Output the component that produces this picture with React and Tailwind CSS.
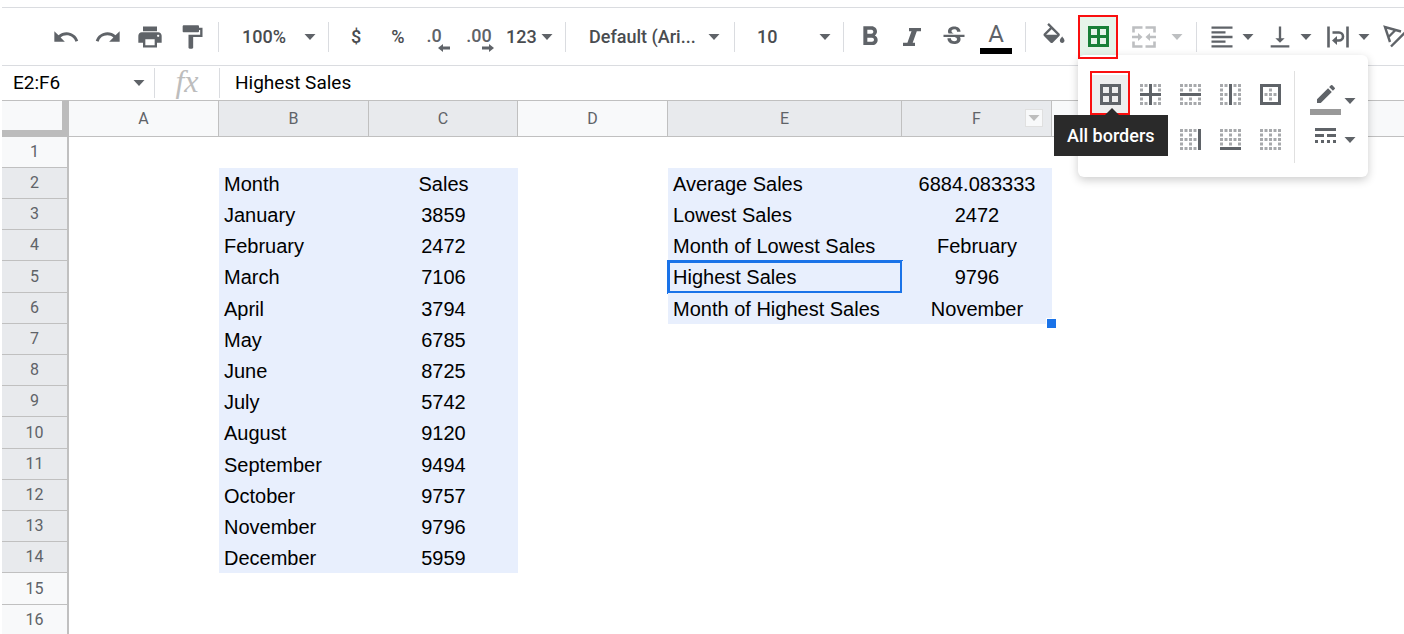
import React, { useState } from 'react';
import {
  MdUndo, MdRedo, MdPrint, MdFormatPaint, MdFormatBold, MdStrikethroughS,
  MdEdit, MdFormatAlignLeft, MdVerticalAlignBottom
} from 'react-icons/md';

const ICON = 28;

// Sheet data
const SALES = [
  ['Month', 'Sales'],
  ['January', '3859'],
  ['February', '2472'],
  ['March', '7106'],
  ['April', '3794'],
  ['May', '6785'],
  ['June', '8725'],
  ['July', '5742'],
  ['August', '9120'],
  ['September', '9494'],
  ['October', '9757'],
  ['November', '9796'],
  ['December', '5959']
];
const SUMMARY = [
  ['Average Sales', '6884.083333'],
  ['Lowest Sales', '2472'],
  ['Month of Lowest Sales', 'February'],
  ['Highest Sales', '9796'],
  ['Month of Highest Sales', 'November']
];
const ROWS = Array.from({ length: 16 }, (_, i) => i + 1);

const COLUMNS = [
  { id: 'A' },
  { id: 'B', selected: true },
  { id: 'C', selected: true },
  { id: 'D' },
  { id: 'E', selected: true },
  { id: 'F', selected: true, menu: true }
];

// Line rects on a 14x14 grid: [x, y, width, height]
const LINES = {
  left: [0, 0, 2, 14],
  right: [12, 0, 2, 14],
  top: [0, 0, 14, 2],
  bottom: [0, 12, 14, 2],
  h: [0, 6, 14, 2],
  v: [6, 0, 2, 14]
};

const BORDERS = [
  { label: 'All borders', lines: ['left', 'right', 'top', 'bottom', 'h', 'v'], solid: true },
  { label: 'Inner borders', lines: ['h', 'v'] },
  { label: 'Horizontal borders', lines: ['h'] },
  { label: 'Vertical borders', lines: ['v'] },
  { label: 'Outer borders', lines: ['left', 'right', 'top', 'bottom'] },
  { label: 'Left border', lines: ['left'] },
  { label: 'Top border', lines: ['top'] },
  { label: 'Right border', lines: ['right'] },
  { label: 'Bottom border', lines: ['bottom'] },
  { label: 'Clear borders', lines: [] }
];

// Dots every 3 units, only where a cell edge runs
const DOTS = [0, 3, 6, 9, 12].flatMap((y) =>
  [0, 3, 6, 9, 12].filter((x) => x % 6 === 0 || y % 6 === 0).map((x) => [x, y])
);

function BorderIcon({ lines, solid }) {
  return (
    <svg width="21" height="21" viewBox="0 0 14 14" fill="currentColor" aria-hidden="true">
      {!solid && DOTS.map(([x, y]) => (
        <rect key={`${x}-${y}`} x={x} y={y} width="2" height="2" opacity="0.55" />
      ))}
      {lines.map((id) => {
        const [x, y, w, h] = LINES[id];
        return <rect key={id} x={x} y={y} width={w} height={h} />;
      })}
    </svg>
  );
}

function Caret({ className = '' }) {
  return (
    <svg width="12" height="6" viewBox="0 0 12 6" className={`shrink-0 pointer-events-none ${className}`} fill="currentColor" aria-hidden="true">
      <path d="M0.5 0h11L6 6z" />
    </svg>
  );
}

function Separator() {
  return <div className="w-px h-[30px] shrink-0 bg-[#dadce0]" />;
}

function Tool({ label, children, className = 'w-[42px]' }) {
  return (
    <button aria-label={label} className={`h-10 shrink-0 flex items-center justify-center ${className}`}>
      {children}
    </button>
  );
}

function ItalicIcon() {
  return (
    <svg width="18" height="18" viewBox="0 0 18 18" fill="currentColor" aria-hidden="true">
      <path d="M6 0h12v3.300h-4.200l-4.100 11.400H12V18H0v-3.300h4.400L8.500 3.300H6z" />
    </svg>
  );
}

function FillIcon() {
  return (
    <svg width="28" height="20" viewBox="0 0 24 17" className="mb-2" fill="currentColor" aria-hidden="true">
      <path d="M16.560 8.940L7.620 0 6.210 1.410l2.380 2.380-5.150 5.150c-.59.59-.59 1.540 0 2.120l5.500 5.500c.29.29.68.44 1.060.44s.77-.15 1.060-.44l5.500-5.500c.59-.58.59-1.530 0-2.120zM5.210 10L10 5.210 14.790 10H5.210zM19 11.500s-2 2.170-2 3.500c0 1.100.9 2 2 2s2-.9 2-2c0-1.330-2-3.500-2-3.500z" />
    </svg>
  );
}

function MergeIcon() {
  return (
    <svg width="24" height="22" viewBox="0 0 24 22" fill="none" stroke="currentColor" strokeWidth="2.6" aria-hidden="true">
      <path d="M10.500 1.500H1.500V6.500M13.500 1.500h9V6.500M10.500 20.500h-9V15.500M13.500 20.500h9V15.500M0 11h7M24 11h-7" />
      <path d="M6 7l4.500 4L6 15zM18 7l-4.500 4 4.500 4z" fill="currentColor" stroke="none" />
    </svg>
  );
}

function WrapIcon() {
  return (
    <svg width="22" height="22" viewBox="0 0 22 22" fill="none" stroke="currentColor" strokeWidth="2.6" aria-hidden="true">
      <path d="M1.500 0.500v21M20.500 0.500v21M5.500 6.500h6.500a4 4 0 0 1 0 8h-3" />
      <path d="M10 10v9l-5-4.500z" fill="currentColor" stroke="none" />
    </svg>
  );
}

function RotateIcon() {
  return (
    <svg width="24" height="24" viewBox="0 0 24 24" fill="none" stroke="currentColor" strokeWidth="2.4" aria-hidden="true">
      <path d="M18 6.500L2 2l5 15M12.500 5L5.500 12M8 21.500L22 7.500" />
    </svg>
  );
}

function LineStyleIcon() {
  return (
    <svg width="21" height="15" viewBox="0 0 21 15" fill="currentColor" aria-hidden="true">
      <path d="M0 0h21v3H0zM0 6h9v3H0zM12 6h9v3h-9zM0 12h3v3H0zM6 12h3v3H6zM12 12h3v3h-3zM18 12h3v3h-3z" />
    </svg>
  );
}

function DecimalIcon({ text, right }) {
  return (
    <span className={`flex flex-col ${right ? 'pl-0.5' : 'pl-0'}`}>
      <span className={`leading-7 ${right ? 'pr-0.5' : 'pr-2'}`}>{text}</span>
      <svg width="12" height="8" viewBox="0 0 12 8" className="self-end -mt-1.5" fill="currentColor" aria-hidden="true">
        <path d={right ? 'M0 2.600h7V0l5 4-5 4V5.400H0z' : 'M12 2.600H5V0L0 4l5 4V5.400h7z'} />
      </svg>
    </span>
  );
}

function BorderMenu() {
  return (
    <div className="absolute left-0 top-10 z-20 flex items-start w-[290px] h-[122px] pl-3 pt-5 bg-white rounded-md shadow-[0_3px_10px_rgba(0,0,0,0.2)]">
      <div className="grid grid-cols-5 gap-y-[5px]">
        {BORDERS.map(({ label, lines, solid }, i) => (
          <div key={label} className="relative w-10 h-10">
            <button aria-label={label} className={`w-full h-full flex items-center justify-center ${i === 0 ? 'bg-[#eeeeee]' : ''}`}>
              <BorderIcon lines={lines} solid={solid} />
            </button>
            {i === 0 && (
              <>
                <span className="absolute -top-1 bottom-0 inset-x-0 border-2 border-[#fa0f0f] pointer-events-none" />
                <span className="absolute z-10 top-[33px] left-[15px] border-x-[7px] border-b-[7px] border-x-transparent border-b-[#2a2a2a]" />
                <span role="tooltip" className="absolute z-10 top-10 -left-9 px-[13px] leading-[41px] whitespace-nowrap bg-[#2a2a2a] text-white text-lg font-medium">
                  {label}
                </span>
              </>
            )}
          </div>
        ))}
      </div>
      <div className="w-px h-[92px] ml-1 -mt-1 bg-[#e0e0e0]" />
      <div className="flex flex-col ml-[15px]">
        <button aria-label="Border color" className="flex items-end gap-[3px] h-10">
          <span className="flex flex-col items-center w-[31px]">
            <MdEdit size={24} />
            <span className="w-full h-1.5 mt-[3px] bg-[#999999]" />
          </span>
          <Caret className="mb-[11px]" />
        </button>
        <button aria-label="Border style" className="flex items-center gap-[3px] h-[42px]">
          <span className="flex justify-center w-[31px]">
            <LineStyleIcon />
          </span>
          <Caret className="mt-2" />
        </button>
      </div>
    </div>
  );
}

function Toolbar() {
  return (
    <div className="flex items-center h-[59px] mt-[7px] pl-[43px] border-y border-[#dadce0] text-[#5f6368] text-lg font-medium">
      <Tool label="Undo"><MdUndo size={ICON} /></Tool>
      <Tool label="Redo"><MdRedo size={ICON} /></Tool>
      <Tool label="Print"><MdPrint size={ICON} /></Tool>
      <Tool label="Paint format"><MdFormatPaint size={ICON} /></Tool>
      <span className="w-[5px] shrink-0" />
      <Separator />
      <button className="w-[109px] pl-[23px] pr-3 shrink-0 flex items-center justify-between text-[#494c50]">
        100%
        <Caret className="text-[#5f6368]" />
      </button>
      <Separator />
      <Tool label="Format as currency" className="w-[42px] ml-1.5 text-[#494c50]">$</Tool>
      <Tool label="Format as percent" className="w-[42px] text-[#494c50]">%</Tool>
      <Tool label="Decrease decimal places" className="w-[38px]"><DecimalIcon text=".0" /></Tool>
      <Tool label="Increase decimal places" className="w-11"><DecimalIcon text=".00" right /></Tool>
      <button className="w-16 pl-[5px] shrink-0 flex items-center gap-1 text-[#494c50]">
        123
        <Caret className="text-[#5f6368]" />
      </button>
      <Separator />
      <label className="relative w-[168px] shrink-0 flex items-center">
        <select aria-label="Font" className="appearance-none w-full pl-[23px] text-[#494c50] outline-none">
          <option>Default (Ari...</option>
        </select>
        <Caret className="absolute right-3.5" />
      </label>
      <Separator />
      <label className="relative w-[108px] shrink-0 flex items-center">
        <select aria-label="Font size" className="appearance-none w-full pl-[22px] text-[#494c50] outline-none">
          <option>10</option>
        </select>
        <Caret className="absolute right-3" />
      </label>
      <Separator />
      <span className="w-[5px] shrink-0" />
      <Tool label="Bold"><MdFormatBold size={32} /></Tool>
      <Tool label="Italic"><ItalicIcon /></Tool>
      <Tool label="Strikethrough"><MdStrikethroughS size={ICON} /></Tool>
      <Tool label="Text color">
        <span className="flex flex-col items-center">
          <span className="text-2xl leading-7 font-normal">A</span>
          <span className="w-8 h-1.5 bg-black" />
        </span>
      </Tool>
      <span className="w-2 shrink-0" />
      <Separator />
      <Tool label="Fill color" className="w-[52px] pl-1"><FillIcon /></Tool>
      <div className="relative w-10 h-[44px] shrink-0">
        <button aria-label="Borders" className="w-full h-full flex items-center justify-center bg-[#e6f4ea] text-[#188038]">
          <BorderIcon lines={BORDERS[0].lines} solid />
        </button>
        <BorderMenu />
        <span className="absolute inset-0 z-30 border-2 border-[#fa0f0f] pointer-events-none" />
      </div>
      <button aria-label="Merge cells" className="w-[78px] pl-3.5 shrink-0 flex items-center gap-[15px] text-[#bdbfc1]">
        <MergeIcon />
        <Caret />
      </button>
      <Separator />
      <button aria-label="Horizontal align" className="w-[58px] pl-[11px] shrink-0 flex items-center gap-1.5">
        <MdFormatAlignLeft size={ICON} />
        <Caret />
      </button>
      <button aria-label="Vertical align" className="w-[58px] pl-[11px] shrink-0 flex items-center gap-1.5">
        <MdVerticalAlignBottom size={ICON} />
        <Caret />
      </button>
      <button aria-label="Text wrapping" className="w-[58px] pl-3.5 shrink-0 flex items-center gap-[9px]">
        <WrapIcon />
        <Caret />
      </button>
      <button aria-label="Text rotation" className="pl-3 shrink-0">
        <RotateIcon />
      </button>
    </div>
  );
}

function FormulaBar() {
  const [range, setRange] = useState('E2:F6');
  const [formula, setFormula] = useState('Highest Sales');

  return (
    <div className="flex items-center h-[34px] text-[19px] text-black">
      <input aria-label="Name box" value={range} onChange={(e) => setRange(e.target.value)} className="w-[131px] pl-[11px] shrink-0 outline-none" />
      <Caret className="text-[#5f6368]" />
      <span className="w-[9px] shrink-0" />
      <Separator />
      <span className="w-16 pb-1 shrink-0 text-center italic text-[32px] leading-7 text-[#bdbdbd] font-['Liberation_Serif',serif]">fx</span>
      <Separator />
      <input aria-label="Formula" value={formula} onChange={(e) => setFormula(e.target.value)} className="flex-1 min-w-0 pl-[15px] outline-none" />
    </div>
  );
}

function Sheet() {
  return (
    <table className="w-full table-fixed border-separate border-spacing-0 text-[#5f6368]">
      <colgroup>
        <col className="w-[67px]" />
        <col className="w-[150px]" />
        <col className="w-[150px]" />
        <col className="w-[149px]" />
        <col className="w-[150px]" />
        <col className="w-[234px]" />
        <col className="w-[150px]" />
        <col />
      </colgroup>
      <thead>
        <tr className="h-[37px] text-base">
          <td className="p-0 border-t border-t-[#c0c0c0] border-r-[7px] border-b-[7px] border-r-[#bcbcbc] border-b-[#bcbcbc] bg-[#f8f9fa]" />
          {COLUMNS.map(({ id, selected, menu }) => (
            <th key={id} scope="col" className={`relative p-0 font-normal border-y border-r border-[#c0c0c0] ${selected ? 'bg-[#e8eaed]' : 'bg-[#f8f9fa]'}`}>
              {id}
              {menu && (
                <button aria-label="Column menu" className="absolute right-2 top-2 w-[18px] h-[18px] flex items-center justify-center border border-[#e0e0e0] bg-[#f8f9fa] text-[#bdbdbd]">
                  <Caret />
                </button>
              )}
            </th>
          ))}
          <td className="p-0 border-y border-[#c0c0c0] bg-[#f8f9fa]" />
        </tr>
      </thead>
      <tbody>
        {ROWS.map((n) => {
          const sales = SALES[n - 2];
          const summary = SUMMARY[n - 2];
          const active = n === 5;
          return (
            <tr key={n} className="h-[31px] nth-[5n]:h-8 text-xl leading-6 text-black font-['Liberation_Sans',Arial,sans-serif]">
              <th scope="row" className={`p-0 text-base leading-6 font-normal text-[#5f6368] font-[Roboto,sans-serif] border-b border-r-2 border-[#c0c0c0] ${sales ? 'bg-[#e8eaed]' : 'bg-[#f8f9fa]'}`}>
                {n}
              </th>
              <td />
              <td className={`p-0 pl-[5px] ${sales ? 'bg-[#e8effd]' : ''}`}>{sales?.[0]}</td>
              <td className={`p-0 text-center ${sales ? 'bg-[#e8effd]' : ''}`}>{sales?.[1]}</td>
              <td />
              <td className={`relative p-0 pl-[5px] ${summary ? 'bg-[#e8effd]' : ''}`}>
                {summary?.[0]}
                {active && <span className="absolute -inset-px border-[3px] border-[#1a73e8]" />}
              </td>
              <td className={`relative p-0 text-center ${summary ? 'bg-[#e8effd]' : ''}`}>
                {summary?.[1]}
                {n === 6 && <span className="absolute -right-[5px] -bottom-[5px] w-[11px] h-[11px] border border-white bg-[#1a73e8]" />}
              </td>
              <td />
            </tr>
          );
        })}
      </tbody>
    </table>
  );
}

export default function App() {
  return (
    <div className="h-screen overflow-clip pl-0.5 bg-white font-[Roboto,sans-serif]">
      <Toolbar />
      <FormulaBar />
      <Sheet />
    </div>
  );
}
